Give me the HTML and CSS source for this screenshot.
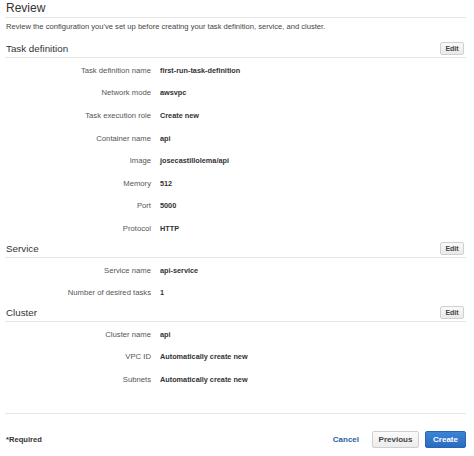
FILE: index.html
```
<!DOCTYPE html>
<html lang="en">

<head>
  <meta charset="UTF-8" />
  <meta name="viewport" content="width=device-width, initial-scale=1.0" />
  <title>Review</title>
  <link rel="stylesheet" href="styles.css">
</head>

<body>
  <div class="container">
    <h1>Review</h1>
    <p class="desc">Review the configuration you've set up before creating your task definition, service, and cluster.</p>

    <div class="section-head">
      <h2>Task definition</h2>
      <button class="edit">Edit</button>
    </div>
    <div class="rows">
      <div class="row"><span class="label">Task definition name</span><span class="value">first-run-task-definition</span></div>
      <div class="row"><span class="label">Network mode</span><span class="value">awsvpc</span></div>
      <div class="row"><span class="label">Task execution role</span><span class="value">Create new</span></div>
      <div class="row"><span class="label">Container name</span><span class="value">api</span></div>
      <div class="row"><span class="label">Image</span><span class="value">josecastillolema/api</span></div>
      <div class="row"><span class="label">Memory</span><span class="value">512</span></div>
      <div class="row"><span class="label">Port</span><span class="value">5000</span></div>
      <div class="row"><span class="label">Protocol</span><span class="value">HTTP</span></div>
    </div>

    <div class="section-head">
      <h2>Service</h2>
      <button class="edit">Edit</button>
    </div>
    <div class="rows">
      <div class="row"><span class="label">Service name</span><span class="value">api-service</span></div>
      <div class="row"><span class="label">Number of desired tasks</span><span class="value">1</span></div>
    </div>

    <div class="section-head">
      <h2>Cluster</h2>
      <button class="edit">Edit</button>
    </div>
    <div class="rows">
      <div class="row"><span class="label">Cluster name</span><span class="value">api</span></div>
      <div class="row"><span class="label">VPC ID</span><span class="value">Automatically create new</span></div>
      <div class="row"><span class="label">Subnets</span><span class="value">Automatically create new</span></div>
    </div>

    <div class="footer">
      <span class="required">*Required</span>
      <div class="actions">
        <a class="cancel" href="#">Cancel</a>
        <button class="btn">Previous</button>
        <button class="btn primary">Create</button>
      </div>
    </div>
  </div>
</body>

</html>
```

FILE: styles.css
```
body {
  margin: 0;
  padding: 0;
  background: #fff;
  color: #333;
  font-family: "Liberation Sans", Arial, sans-serif;
}

.container {
  padding: 0 8px 0 5px;
}

h1 {
  margin: 0;
  height: 17px;
  line-height: 17px;
  font-size: 12px;
  font-weight: normal;
  color: #333;
  padding-left: 1px;
  border-bottom: 1px solid #e6e6e6;
}

.desc {
  margin: 4px 0 8px 1px;
  font-size: 7.6px;
  line-height: 10px;
  color: #444;
}

.section-head {
  display: flex;
  align-items: center;
  justify-content: space-between;
  height: 17px;
  border-bottom: 1px solid #e6e6e6;
}

h2 {
  margin: 0 0 0 1px;
  font-size: 9.8px;
  font-weight: normal;
  color: #333;
}

.edit {
  font-family: inherit;
  font-size: 7px;
  font-weight: bold;
  color: #444;
  width: 24px;
  height: 13px;
  padding: 0;
  margin-right: 2px;
  border: 1px solid #d0d0d0;
  border-radius: 2px;
  background: linear-gradient(#fafafa, #e9e9e9);
}

.rows {
  padding-top: 1px;
}

.row {
  display: flex;
  align-items: center;
  height: 22.6px;
  font-size: 7.7px;
}

.label {
  width: 146px;
  text-align: right;
  color: #555;
}

.value {
  margin-left: 9px;
  font-size: 7.3px;
  font-weight: bold;
  color: #333;
}

.footer {
  display: flex;
  align-items: center;
  justify-content: space-between;
  margin-top: 22px;
  padding-top: 17px;
  border-top: 1px solid #e6e6e6;
}

.required {
  margin-left: 1px;
  font-size: 7.6px;
  font-weight: bold;
  color: #333;
}

.actions {
  display: flex;
  align-items: center;
}

.cancel {
  font-size: 8px;
  font-weight: bold;
  color: #2a5ea8;
  text-decoration: none;
  margin-right: 13px;
}

.btn {
  font-family: inherit;
  font-size: 8px;
  font-weight: bold;
  color: #444;
  height: 17px;
  width: 47px;
  padding: 0;
  border: 1px solid #cfcfcf;
  border-radius: 2px;
  background: linear-gradient(#fbfbfb, #ececec);
}

.btn.primary {
  width: 41px;
  margin-left: 6px;
  color: #fff;
  border-color: #2a64b4;
  background: linear-gradient(#3c83d6, #2a6bc0);
}
```
